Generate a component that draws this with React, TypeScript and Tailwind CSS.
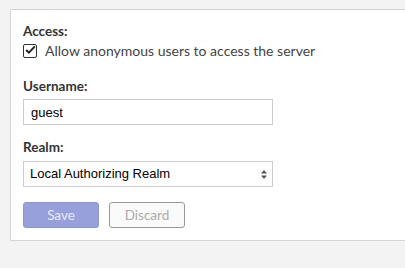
import React, { useState } from "react";

const labelFont = { fontFamily: "Lato, 'Open Sans', sans-serif" };

export default function App() {
  const [allowAnon, setAllowAnon] = useState(true);
  const [username, setUsername] = useState("guest");
  const [realm, setRealm] = useState("local");

  return (
    <div className="h-[268px] w-[405px] overflow-hidden bg-[#f3f3f3] pl-[10px] pt-[9px]">
      <div
        className="w-[420px] border border-[#d4d4d4] bg-white pb-[12px] pl-[12px] pt-[12px] text-[#333]"
        style={labelFont}
      >
        {/* Access */}
        <div className="text-[13.5px] font-bold leading-[18px]">Access:</div>
        <label className="mt-[2px] flex items-center gap-[8px] text-[14px] leading-[18px] text-[#444]">
          <span
            className="flex h-[14px] w-[14px] items-center justify-center rounded-[2px] border border-[#333]"
            onClick={() => setAllowAnon(!allowAnon)}
          >
            {allowAnon && (
              <svg width="14" height="12" viewBox="0 0 14 12" className="-mt-[2px] ml-[1px]">
                <path d="M1.5 6 L5 9.5 L12.5 1.5" fill="none" stroke="#222" strokeWidth="2.4" />
              </svg>
            )}
          </span>
          Allow anonymous users to access the server
        </label>

        {/* Username */}
        <div className="mt-[17px] text-[13.5px] font-bold leading-[18px]">Username:</div>
        <input
          value={username}
          onChange={(e) => setUsername(e.target.value)}
          className="mt-[4px] block h-[26px] w-[250px] border border-[#ccc] px-[7px] text-[13px] text-black outline-none"
          style={{ fontFamily: "'Liberation Sans', Arial, sans-serif" }}
        />

        {/* Realm */}
        <div className="mt-[13px] text-[13.5px] font-bold leading-[18px]">Realm:</div>
        <div className="relative mt-[5px] w-[250px]">
          <select
            value={realm}
            onChange={(e) => setRealm(e.target.value)}
            className="block h-[26px] w-full appearance-none border border-[#ccc] bg-white px-[6px] text-[13px] text-black outline-none"
            style={{ fontFamily: "'Liberation Sans', Arial, sans-serif" }}
          >
            <option value="local">Local Authorizing Realm</option>
          </select>
          <svg
            width="6"
            height="9"
            viewBox="0 0 6 9"
            className="pointer-events-none absolute right-[6px] top-[9px]"
          >
            <path d="M3 0 L6 3.5 L0 3.5 Z M3 9 L6 5.5 L0 5.5 Z" fill="#555" />
          </svg>
        </div>

        {/* Buttons */}
        <div className="mt-[15px] flex gap-[10px]">
          <button className="h-[26px] w-[76px] rounded-[3px] border border-[#8f96cc] bg-[#98a0dc] text-[13.5px] text-[#e8eaf8]">
            Save
          </button>
          <button className="h-[26px] w-[76px] rounded-[3px] border border-[#999] bg-[#fafafa] text-[13.5px] text-[#aaa]">
            Discard
          </button>
        </div>
      </div>
    </div>
  );
}
